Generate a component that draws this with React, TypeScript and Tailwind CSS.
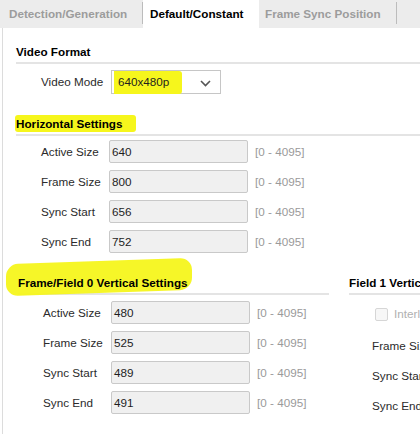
import React from 'react';

const hRows = [
    { label: 'Active Size', value: '640' },
    { label: 'Frame Size', value: '800' },
    { label: 'Sync Start', value: '656' },
    { label: 'Sync End', value: '752' },
];

const vRows = [
    { label: 'Active Size', value: '480' },
    { label: 'Frame Size', value: '525' },
    { label: 'Sync Start', value: '489' },
    { label: 'Sync End', value: '491' },
];

const Row: React.FC<{ label: string; value: string }> = ({ label, value }) => (
    <div className="flex items-center h-[23px]">
        <span className="w-[68px] shrink-0 text-[#2b2b2b]">{label}</span>
        <div className="w-[139px] h-[23px] shrink-0 bg-[#f0f0f0] border border-[#c9c9c9] rounded-[2px] flex items-center pl-[2px] text-[#1e1e1e]">
            {value}
        </div>
        <span className="ml-[7px] text-[#9a9a9a]">[0 - 4095]</span>
    </div>
);

const App: React.FC = () => {
    return (
        <div className="w-[420px] h-[434px] overflow-hidden bg-white text-[11.7px] leading-[14px] font-['Liberation_Sans',Arial,sans-serif]">
            {/* Tabs */}
            <div className="h-[28px] bg-[#ececec] flex items-stretch">
                <div className="w-[142px] pl-[9px] flex items-center font-bold text-[#9c9c9c]">Detection/Generation</div>
                <div className="w-px bg-[#bcbcbc] mt-[2px] mb-[4px]" />
                <div className="w-[116px] bg-white pl-[7px] flex items-center font-bold text-black">Default/Constant</div>
                <div className="w-[137px] pl-[6px] flex items-center font-bold text-[#9c9c9c]">Frame Sync Position</div>
                <div className="w-px bg-[#bcbcbc] mt-[2px] mb-[4px]" />
            </div>

            {/* Content */}
            <div className="ml-[2px] border-l border-[#dcdcdc] h-[406px] pl-[13px]">
                {/* Video Format */}
                <div className="pt-[17px]">
                    <div className="pb-[3px] border-b-2 border-[#e4e4e4] font-bold text-black">Video Format</div>
                    <div className="flex items-center mt-[6px] pl-[25px]">
                        <span className="w-[70px] text-[#2b2b2b]">Video Mode</span>
                        <div className="w-[110px] h-[24px] border border-[#c6c6c6] bg-white flex items-center relative pl-[2px]">
                            <span className="bg-[#f6f61c] h-[23px] w-[68px] pl-[4px] flex items-center text-[#1e1e1e] rounded-r-[3px]">640x480p</span>
                            <svg className="absolute right-[9px] top-[9px]" width="11" height="7" viewBox="0 0 11 7">
                                <path d="M1 1 L5.5 5.5 L10 1" fill="none" stroke="#555" strokeWidth="1.6" />
                            </svg>
                        </div>
                    </div>
                </div>

                {/* Horizontal Settings */}
                <div className="mt-[23px]">
                    <div className="pb-[3px] border-b-2 border-[#e4e4e4]">
                        <span className="bg-[#f6f61c] font-bold text-black -ml-[1px] pl-[1px] py-[2px] rounded-[3px] pr-[13px]">Horizontal Settings</span>
                    </div>
                    <div className="mt-[4px] pl-[25px] flex flex-col gap-[7px]">
                        {hRows.map((r) => (
                            <Row key={r.label} label={r.label} value={r.value} />
                        ))}
                    </div>
                </div>

                {/* Vertical Settings */}
                <div className="mt-[23px] flex gap-[20px]">
                    <div className="w-[313px] shrink-0 pl-[2px]">
                        <div className="pb-[3px] border-b-2 border-[#e4e4e4] relative">
                            <span className="absolute left-[-12px] top-[-15px] w-[186px] h-[32px] bg-[#f6f61c] rounded-[12px] -skew-y-2 opacity-95" />
                            <span className="relative font-bold text-black">Frame/Field 0 Vertical Settings</span>
                        </div>
                        <div className="mt-[6px] pl-[25px] flex flex-col gap-[7px]">
                            {vRows.map((r) => (
                                <Row key={r.label} label={r.label} value={r.value} />
                            ))}
                        </div>
                    </div>
                    <div className="w-[120px] shrink-0">
                        <div className="pb-[3px] border-b-2 border-[#e4e4e4] font-bold text-black whitespace-nowrap">Field 1 Vertical Settings</div>
                        <div className="mt-[12px] pl-[26px] flex items-center gap-[6px] h-[14px]">
                            <span className="w-[13px] h-[13px] border border-[#d6d6d6] rounded-[2px] bg-[#f7f7f7]" />
                            <span className="text-[#b0b0b0] whitespace-nowrap">Interlaced</span>
                        </div>
                        <div className="pl-[23px] flex flex-col text-[#2b2b2b] whitespace-nowrap">
                            <span className="mt-[18px]">Frame Size</span>
                            <span className="mt-[16px]">Sync Start</span>
                            <span className="mt-[16px]">Sync End</span>
                        </div>
                    </div>
                </div>
            </div>
        </div>
    );
};

export default App;
